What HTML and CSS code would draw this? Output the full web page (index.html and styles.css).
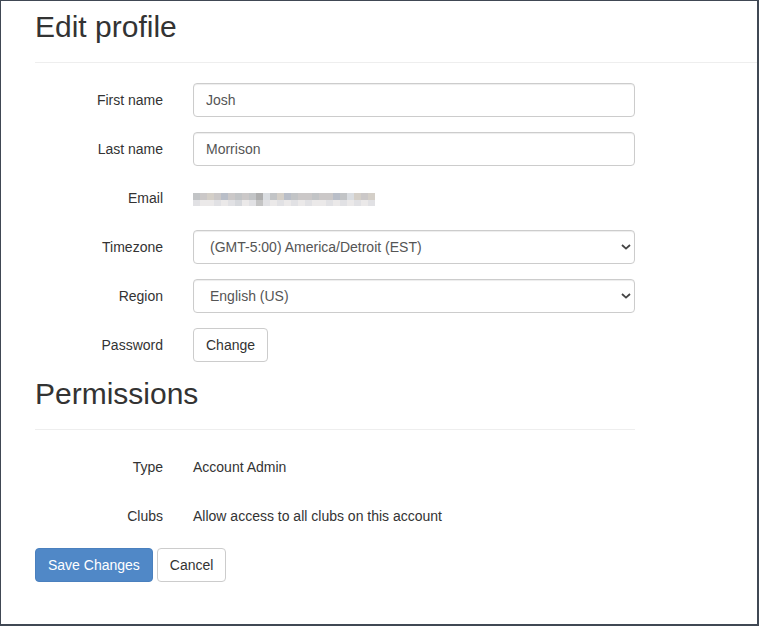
FILE: index.html
```html
<!DOCTYPE html>
<html lang="en">
<head>
  <meta charset="UTF-8">
  <title>Edit profile</title>
  <link rel="stylesheet" href="styles.css">
</head>
<body>
  <div class="frame">
    <div class="page-header">
      <h2>Edit profile</h2>
    </div>

    <form class="profile-form">
      <div class="form-row">
        <label for="firstName">First name</label>
        <input id="firstName" class="form-control" type="text" value="Josh">
      </div>
      <div class="form-row">
        <label for="lastName">Last name</label>
        <input id="lastName" class="form-control" type="text" value="Morrison">
      </div>
      <div class="form-row">
        <label>Email</label>
        <div class="static">
          <!-- address is hidden behind a pixel mosaic -->
          <div class="mosaic">
            <div class="mosaic-row top">
              <span class="g3"></span><span class="g4"></span><span class="g5"></span><span class="g4"></span><span class="g2"></span><span class="g4"></span><span class="g3"></span><span class="g4"></span><span class="g3"></span><span class="g1"></span><span class="g6"></span><span class="g3"></span><span class="g5"></span><span class="g2"></span><span class="g3"></span><span class="g4"></span><span class="g4"></span><span class="g3"></span><span class="g4"></span><span class="g4"></span><span class="g2"></span><span class="g3"></span><span class="g6"></span><span class="g5"></span><span class="g4"></span><span class="g5"></span>
            </div>
            <div class="mosaic-row bottom">
              <span class="l3"></span><span class="l4"></span><span class="l4"></span><span class="l3"></span><span class="l4"></span><span class="l3"></span><span class="l2"></span><span class="l4"></span><span class="l3"></span><span class="l1"></span><span class="l3"></span><span class="l4"></span><span class="l3"></span><span class="l4"></span><span class="l3"></span><span class="l4"></span><span class="l3"></span><span class="l4"></span><span class="l4"></span><span class="l3"></span><span class="l4"></span><span class="l3"></span><span class="l4"></span><span class="l3"></span><span class="l4"></span><span class="l3"></span>
            </div>
          </div>
        </div>
      </div>
      <div class="form-row">
        <label for="timezone">Timezone</label>
        <div class="select-wrap">
          <select id="timezone" class="form-control">
            <option>(GMT-5:00) America/Detroit (EST)</option>
          </select>
          <svg class="caret" width="10" height="6" viewBox="0 0 10 6"><path d="M1 1l4 3.6L9 1" fill="none" stroke="#444" stroke-width="1.8"/></svg>
        </div>
      </div>
      <div class="form-row">
        <label for="region">Region</label>
        <div class="select-wrap">
          <select id="region" class="form-control">
            <option>English (US)</option>
          </select>
          <svg class="caret" width="10" height="6" viewBox="0 0 10 6"><path d="M1 1l4 3.6L9 1" fill="none" stroke="#444" stroke-width="1.8"/></svg>
        </div>
      </div>
      <div class="form-row">
        <label>Password</label>
        <div><button type="button" class="btn">Change</button></div>
      </div>

      <div class="page-header sub">
        <h2>Permissions</h2>
      </div>

      <div class="form-row">
        <label>Type</label>
        <div class="static">Account Admin</div>
      </div>
      <div class="form-row">
        <label>Clubs</label>
        <div class="static">Allow access to all clubs on this account</div>
      </div>

      <div class="actions">
        <button type="button" class="btn btn-primary">Save Changes</button>
        <button type="button" class="btn">Cancel</button>
      </div>
    </form>
  </div>
</body>
</html>
```

FILE: styles.css
```css
* {
  box-sizing: border-box;
}
html, body {
  margin: 0;
  height: 100%;
}
body {
  font-family: "Liberation Sans", Arial, sans-serif;
  font-size: 14px;
  line-height: 20px;
  color: #333;
  background: #fff;
}
.frame {
  height: 626px;
  border-style: solid;
  border-color: #404854;
  border-width: 1px 2px 2px 1px;
  padding: 9px 0 0 34px;
  overflow: hidden;
}
.page-header {
  border-bottom: 1px solid #eee;
  padding-bottom: 9px;
  margin-bottom: 20px;
}
.page-header h2 {
  margin: 0 0 10px;
  font-size: 30px;
  font-weight: 500;
  line-height: 33px;
}
.page-header.sub {
  margin-top: 0;
}
.profile-form {
  width: 600px;
}
.form-row {
  display: grid;
  grid-template-columns: 128px 442px;
  column-gap: 30px;
  margin-bottom: 15px;
}
.form-row label {
  text-align: right;
  padding-top: 7px;
}
.form-control {
  display: block;
  width: 100%;
  height: 34px;
  padding: 6px 12px;
  font: inherit;
  color: #555;
  background: #fff;
  border: 1px solid #ccc;
  border-radius: 4px;
  box-shadow: inset 0 1px 1px rgba(0, 0, 0, 0.075);
}
.select-wrap {
  position: relative;
}
.select-wrap select {
  appearance: none;
  -webkit-appearance: none;
  padding-left: 16px;
}
.caret {
  position: absolute;
  right: 4px;
  top: 14px;
  pointer-events: none;
}
.static {
  padding-top: 7px;
  min-height: 34px;
}
.mosaic {
  padding-top: 5px;
}
.mosaic-row {
  display: flex;
}
.mosaic-row span {
  width: 7px;
}
.mosaic-row.top span {
  height: 7px;
}
.mosaic-row.bottom span {
  height: 6px;
}
.g1 { background: #aeaeae; }
.g2 { background: #b9bec8; }
.g3 { background: #c2c4c6; }
.g4 { background: #cbc8c8; }
.g5 { background: #d4cfc8; }
.g6 { background: #dadde1; }
.l1 { background: #c4c4c4; }
.l2 { background: #d6d8dc; }
.l3 { background: #e1e1e4; }
.l4 { background: #ebe9e9; }
.btn {
  display: inline-block;
  height: 34px;
  padding: 6px 12px;
  font: inherit;
  color: #333;
  background: #fff;
  border: 1px solid #ccc;
  border-radius: 4px;
  cursor: pointer;
}
.btn-primary {
  color: #fff;
  background: #5088c7;
  border-color: #4a80be;
}
.actions {
  display: flex;
  gap: 4px;
}
```
